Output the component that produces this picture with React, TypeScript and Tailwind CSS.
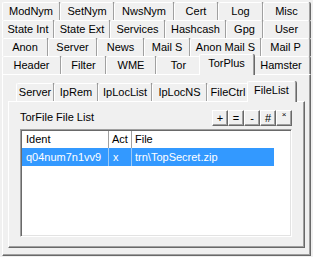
import React from 'react';

type TabDef = { label: string; w: number; selected?: boolean };

const rows: TabDef[][] = [
  [
    { label: 'ModNym', w: 58 },
    { label: 'SetNym', w: 54 },
    { label: 'NwsNym', w: 60 },
    { label: 'Cert', w: 44 },
    { label: 'Log', w: 45 },
    { label: 'Misc', w: 47 },
  ],
  [
    { label: 'State Int', w: 52 },
    { label: 'State Ext', w: 56 },
    { label: 'Services', w: 55 },
    { label: 'Hashcash', w: 61 },
    { label: 'Gpg', w: 37 },
    { label: 'User', w: 47 },
  ],
  [
    { label: 'Anon', w: 46 },
    { label: 'Server', w: 49 },
    { label: 'News', w: 47 },
    { label: 'Mail S', w: 46 },
    { label: 'Anon Mail S', w: 71 },
    { label: 'Mail P', w: 49 },
  ],
  [
    { label: 'Header', w: 59 },
    { label: 'Filter', w: 45 },
    { label: 'WME', w: 50 },
    { label: 'Tor', w: 45 },
    { label: 'TorPlus', w: 51, selected: true },
    { label: 'Hamster', w: 58 },
  ],
];

const subTabs: TabDef[] = [
  { label: 'Server', w: 38 },
  { label: 'IpRem', w: 44 },
  { label: 'IpLocList', w: 54 },
  { label: 'IpLocNS', w: 55 },
  { label: 'FileCtrl', w: 42 },
  { label: 'FileList', w: 45, selected: true },
];

function Tab({ tab }: { tab: TabDef }) {
  if (tab.selected) {
    return (
      <div
        className="relative z-10 -mx-[2px] -mb-[1px] flex h-[21px] items-start justify-center self-end rounded-t-[2px] border-l border-t border-r border-white border-r-[#a0a0a0] bg-[#f0f0f0] pt-[2px] shadow-[1px_0_0_#696969]"
        style={{ width: tab.w + 4 }}
      >
        <span className="text-[11px] leading-[13px]">{tab.label}</span>
      </div>
    );
  }
  return (
    <div
      className="flex h-[18px] items-center justify-center self-end rounded-t-[2px] border-l border-t border-r border-white border-r-[#a0a0a0] bg-[#f0f0f0] shadow-[1px_0_0_#696969]"
      style={{ width: tab.w }}
    >
      <span className="text-[11px] leading-[13px]">{tab.label}</span>
    </div>
  );
}

function ToolButton({ children, small }: { children: React.ReactNode; small?: boolean }) {
  return (
    <div className="flex h-[16px] w-[16px] items-center justify-center border-l border-t border-white border-r border-b border-r-[#696969] border-b-[#696969] shadow-[inset_-1px_-1px_0_#a0a0a0]">
      {small ? (
        <span className="-mt-[5px] text-[8px] leading-[8px]">×</span>
      ) : (
        <span className="text-[11px] leading-[12px]">{children}</span>
      )}
    </div>
  );
}

export default function App() {
  return (
    <div
      className="h-[257px] w-[313px] overflow-hidden bg-[#f0f0f0] pl-[2px] pt-[2px] text-black"
      style={{ fontFamily: '"Liberation Sans", Arial, sans-serif' }}
    >
      {/* stacked tab rows */}
      {rows.map((row, i) => (
        <div key={i} className="flex h-[18px] items-end">
          {row.map((t) => (
            <Tab key={t.label} tab={t} />
          ))}
        </div>
      ))}

      {/* TorPlus page */}
      <div className="h-[182px] w-[309px] border-l border-t border-white border-r border-b border-r-[#696969] border-b-[#696969] shadow-[inset_-1px_-1px_0_#a0a0a0] pl-[5px] pt-[5px]">
        <div className="flex h-[21px] items-end pl-[8px]">
          {subTabs.map((t) => (
            <Tab key={t.label} tab={t} />
          ))}
        </div>

        {/* FileList page */}
        <div className="h-[147px] w-[297px] border-l border-t border-white border-r border-b border-r-[#696969] border-b-[#696969] shadow-[inset_-1px_-1px_0_#a0a0a0] pl-[11px] pt-[7px]">
          <div className="flex h-[17px] w-[272px] items-center justify-between">
            <span className="text-[11px] leading-[13px]">TorFile File List</span>
            <div className="flex">
              <ToolButton>+</ToolButton>
              <ToolButton>=</ToolButton>
              <ToolButton>-</ToolButton>
              <ToolButton>#</ToolButton>
              <ToolButton small>x</ToolButton>
            </div>
          </div>

          <div className="mt-[3px] h-[108px] w-[272px] border-l border-t border-r border-b border-l-[#a0a0a0] border-t-[#a0a0a0] border-r-white border-b-white bg-white shadow-[inset_1px_1px_0_#696969,inset_-1px_-1px_0_#e3e3e3]">
            <div className="ml-[1px] mt-[1px] flex h-[17px] w-[252px] text-[11px] leading-[13px]">
              <div className="flex w-[87px] items-center border-r border-[#a0a0a0] pl-[4px]">Ident</div>
              <div className="flex w-[23px] items-center border-r border-[#a0a0a0] pl-[3px]">Act</div>
              <div className="flex w-[141px] items-center pl-[3px]">File</div>
            </div>
            <div className="ml-[1px] flex h-[18px] w-[252px] bg-[#3399ff] text-[11px] leading-[13px] text-white">
              <div className="flex w-[87px] items-center border-r border-[#9cc9f5] pl-[4px]">q04num7n1vv9</div>
              <div className="flex w-[23px] items-center border-r border-[#9cc9f5] pl-[4px]">x</div>
              <div className="flex w-[141px] items-center pl-[3px]">trn\TopSecret.zip</div>
            </div>
          </div>
        </div>
      </div>
    </div>
  );
}
